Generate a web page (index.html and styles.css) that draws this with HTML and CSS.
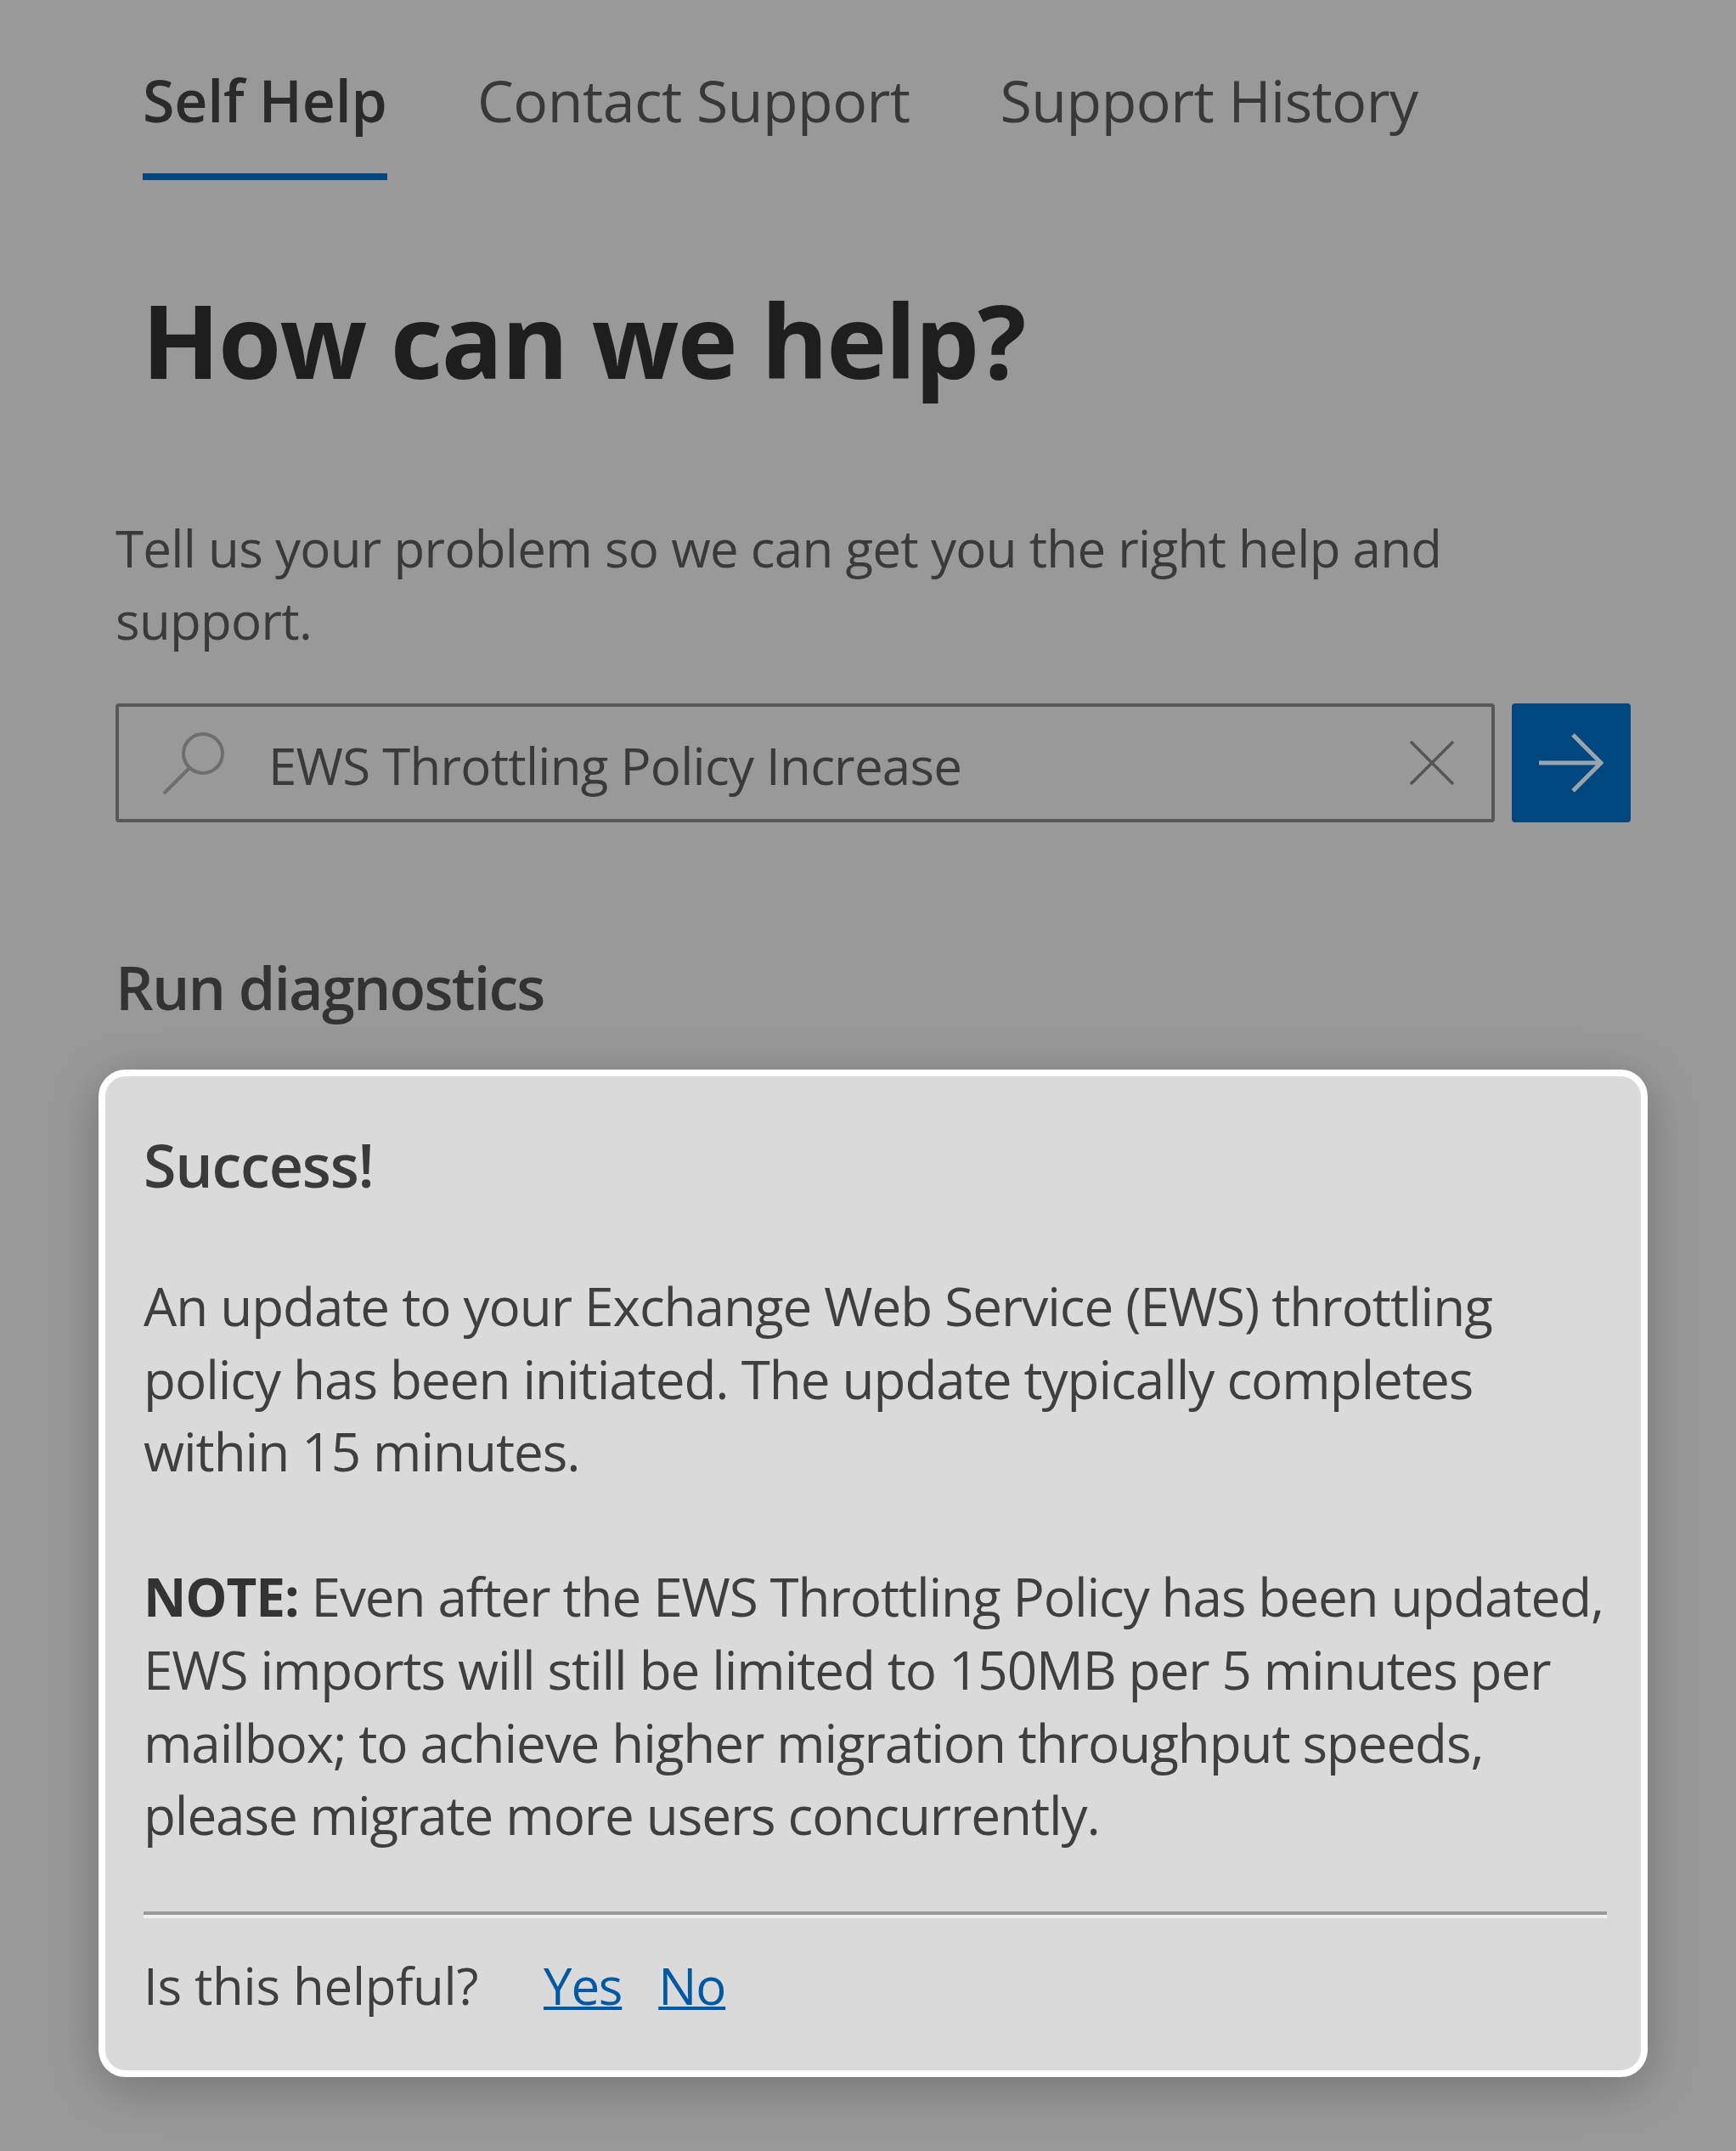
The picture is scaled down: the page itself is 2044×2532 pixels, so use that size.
FILE: index.html
```html
<!DOCTYPE html>
<html lang="en">
<head>
  <meta charset="utf-8">
  <title>How can we help?</title>
  <link rel="stylesheet" href="styles.css">
</head>
<body>
  <div class="page">
    <nav class="tabs">
      <a class="tab active">Self Help</a>
      <a class="tab">Contact Support</a>
      <a class="tab">Support History</a>
    </nav>
    <h1>How can we help?</h1>
    <p class="intro">Tell us your problem so we can get you the right help and support.</p>
    <form class="search">
      <div class="search-box">
        <svg class="search-icon" viewBox="0 0 76 76" fill="none" stroke="#6e6e6e" stroke-width="4">
          <circle cx="49" cy="27" r="23"/>
          <path d="M33 44 L3 74"/>
        </svg>
        <span class="search-text">EWS Throttling Policy Increase</span>
        <svg class="clear-icon" viewBox="0 0 52 52" fill="none" stroke="#555" stroke-width="3.5">
          <path d="M1 1 L51 51 M51 1 L1 51"/>
        </svg>
      </div>
      <button class="go" type="button">
        <svg viewBox="0 0 76 70" fill="none" stroke="#9aa4ad" stroke-width="5">
          <path d="M0 35 H72"/>
          <path d="M40 2 L73 35 L40 68"/>
        </svg>
      </button>
    </form>
    <h2>Run diagnostics</h2>
    <div class="card">
      <h3>Success!</h3>
      <p>An update to your Exchange Web Service (EWS) throttling policy has been initiated. The update typically completes within 15 minutes.</p>
      <p class="note"><b>NOTE:</b> Even after the EWS Throttling Policy has been updated, EWS imports will still be limited to 150MB per 5 minutes per mailbox; to achieve higher migration throughput speeds, please migrate more users concurrently.</p>
      <hr>
      <div class="feedback">
        <span class="feedback-label">Is this helpful?</span>
        <a>Yes</a>
        <a>No</a>
      </div>
    </div>
  </div>
</body>
</html>
```

FILE: styles.css
```css
* {
  box-sizing: border-box;
  margin: 0;
  padding: 0;
}
body {
  background: #999;
  font-family: "Open Sans", "Noto Sans", sans-serif;
  color: #333;
  min-height: 100vh;
}
.page {
  padding: 0 124px 0 136px;
  height: 2532px;
}
.tabs {
  display: flex;
  gap: 106px;
  padding-left: 32px;
  height: 212px;
}
.tab {
  font-size: 68px;
  line-height: 92px;
  padding-top: 72px;
  color: #383838;
  letter-spacing: -0.5px;
}
.tab.active {
  width: 288px;
  color: #2a2a2a;
  font-weight: 600;
  letter-spacing: -0.2px;
  white-space: nowrap;
  border-bottom: 8px solid #00477f;
}
h1 {
  font-size: 120px;
  font-weight: 700;
  line-height: 160px;
  color: #1e1e1e;
  margin-top: 108px;
  padding-left: 31px;
  letter-spacing: -1.8px;
}
.intro {
  font-size: 60px;
  line-height: 85px;
  margin-top: 123px;
  margin-right: 100px;
  letter-spacing: -0.7px;
  color: #3a3a3a;
}
.search {
  display: flex;
  gap: 20px;
  margin-top: 55px;
  height: 140px;
}
.search-box {
  flex: 1;
  display: flex;
  align-items: center;
  border: 4px solid #585858;
  border-radius: 4px;
  padding: 0 44px 0 50px;
}
.search-icon {
  width: 76px;
  height: 76px;
  margin-right: 50px;
}
.search-text {
  flex: 1;
  font-size: 60px;
  letter-spacing: -0.75px;
  padding-top: 5px;
  color: #3a3a3a;
}
.clear-icon {
  width: 52px;
  height: 52px;
}
.go {
  width: 140px;
  border: none;
  border-radius: 4px;
  background: #00477f;
  display: flex;
  align-items: center;
  justify-content: center;
}
.go svg {
  width: 76px;
  height: 70px;
}
h2 {
  font-size: 70px;
  font-weight: 600;
  line-height: 90px;
  margin-top: 149px;
  letter-spacing: -1.8px;
  color: #333;
}
.card {
  margin: 52px 0 0 -20px;
  width: 1824px;
  height: 1186px;
  background: #dadada;
  border: 8px solid #fff;
  border-radius: 32px;
  box-shadow: 0 12px 60px rgba(0, 0, 0, 0.25);
  padding: 65px 40px 0 45px;
}
.card h3 {
  font-size: 70px;
  font-weight: 600;
  line-height: 78px;
  letter-spacing: -1.2px;
  color: #3a3a3a;
}
.card p {
  font-size: 62px;
  line-height: 85.7px;
  letter-spacing: -1.05px;
  color: #3f3f3f;
  margin-top: 85px;
}
.card .note {
  letter-spacing: -1.1px;
}
.card p b {
  font-weight: 700;
  color: #333;
}
.card hr {
  margin-top: 70px;
  border: none;
  border-top: 4px solid #999;
  border-bottom: 4px solid #f0f0f0;
}
.feedback {
  display: flex;
  align-items: baseline;
  padding-top: 38px;
  font-size: 60px;
  letter-spacing: -1.2px;
  color: #3f3f3f;
}
.feedback-label {
  margin-right: 34px;
  letter-spacing: -0.3px;
}
.feedback a {
  color: #0059a3;
  text-decoration: underline;
  text-decoration-thickness: 4px;
  margin-left: 43px;
}
```
